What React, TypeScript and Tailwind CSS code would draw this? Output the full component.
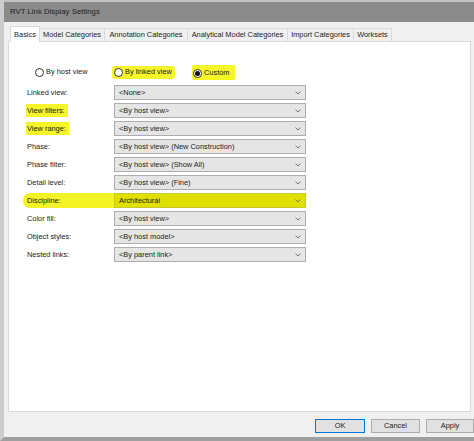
import React from 'react';

const tabs = [
  { name: 'Basics', w: 'w-[30px]', active: true },
  { name: 'Model Categories', w: 'w-[65px]' },
  { name: 'Annotation Categories', w: 'w-[83px]' },
  { name: 'Analytical Model Categories', w: 'w-[100px]' },
  { name: 'Import Categories', w: 'w-[66px]' },
  { name: 'Worksets', w: 'w-[38px]' },
];

const rows = [
  { label: 'Linked view:', value: '<None>' },
  { label: 'View filters:', value: '<By host view>', mark: true },
  { label: 'View range:', value: '<By host view>', mark: true },
  { label: 'Phase:', value: '<By host view> (New Construction)' },
  { label: 'Phase filter:', value: '<By host view> (Show All)' },
  { label: 'Detail level:', value: '<By host view> (Fine)' },
  { label: 'Discipline:', value: 'Architectural', band: true },
  { label: 'Color fill:', value: '<By host view>' },
  { label: 'Object styles:', value: '<By host model>' },
  { label: 'Nested links:', value: '<By parent link>' },
];

function Chevron() {
  return (
    <svg width="6" height="4" viewBox="0 0 6 4" className="shrink-0">
      <path d="M0.5 0.5 L3 3 L5.5 0.5" fill="none" stroke="#6a6a6a" strokeWidth="0.9" />
    </svg>
  );
}

function Radio({ label, checked, mark }: { label: string; checked?: boolean; mark?: string }) {
  return (
    <div className="w-[79px] flex items-center">
      <span className={`flex items-center gap-[2px] ${mark ?? ''}`}>
        <span className="w-[9px] h-[9px] rounded-full border border-[#333] bg-white flex items-center justify-center">
          {checked && <span className="w-[5px] h-[5px] rounded-full bg-[#111]" />}
        </span>
        <span>{label}</span>
      </span>
    </div>
  );
}

export default function App() {
  return (
    <div
      className="w-[474px] h-[441px] overflow-hidden bg-[#f0f0f0] flex flex-col border-l-[4px] border-b-[4px] border-l-[#cdcdcd] border-b-[#9f9f9f] text-[7.4px] leading-none text-[#1a1a1a]"
      style={{ fontFamily: '"Liberation Sans", Arial, sans-serif' }}
    >
      {/* Title bar */}
      <div className="h-[22px] shrink-0 bg-[#8b8b8b] border-t-[2px] border-[#c2c2c2] flex items-center pl-[6px] text-[7.8px] text-[#1e1e1e]">
        RVT Link Display Settings
      </div>

      {/* Tabs */}
      <div className="mt-[4px] ml-[6px] flex items-end h-[16px] shrink-0 relative z-10">
        {tabs.map((t) =>
          t.active ? (
            <div
              key={t.name}
              className={`${t.w} h-[16px] bg-white border border-b-0 border-[#d9d9d9] flex items-center justify-center`}
            >
              {t.name}
            </div>
          ) : (
            <div
              key={t.name}
              className={`${t.w} h-[13px] mb-[1px] bg-[#f0f0f0] border border-l-0 border-b-0 border-[#d9d9d9] flex items-center justify-center`}
            >
              {t.name}
            </div>
          ),
        )}
      </div>

      {/* Panel */}
      <div className="-mt-[1px] ml-[4px] mr-[3px] h-[371px] shrink-0 bg-white border border-[#d9d9d9] flex flex-col">
        <div className="mt-[24px] pl-[26px] h-[12px] flex items-center">
          <Radio label="By host view" />
          <Radio label="By linked view" mark="bg-[#f5f52a] -ml-[2px] pl-[2px] pr-[3px] py-[2px] -my-[2px] rounded-[3px]" />
          <Radio label="Custom" checked mark="bg-[#f5f52a] -ml-[1px] pl-[1px] pr-[6px] pt-[4px] pb-[2px] -my-[3px] rounded-[2px]" />
        </div>

        <div className="mt-[7px] pl-[18px] flex flex-col gap-[3px]">
          {rows.map((r) => (
            <div
              key={r.label}
              className={`h-[15px] flex items-center ${r.band ? 'bg-[#f3f325] -ml-[4px] pl-[4px] w-[283px] rounded-l-[7px]' : ''}`}
            >
              <div className="w-[87px] flex items-center">
                <span className={r.mark ? 'bg-[#f5f52a] -ml-[1px] px-[1px] py-[3px] pr-[3px]' : ''}>{r.label}</span>
              </div>
              <div
                className={`w-[192px] h-[15px] border flex items-center justify-between pl-[4px] pr-[4px] ${
                  r.band ? 'bg-[#e0e000] border-[#c9c92a]' : 'bg-[#e5e5e5] border-[#adadad]'
                }`}
              >
                <span>{r.value}</span>
                <Chevron />
              </div>
            </div>
          ))}
        </div>
      </div>

      {/* Footer buttons */}
      <div className="flex-1 flex items-start justify-end pt-[7px] gap-[6px]">
        <button className="w-[50px] h-[14px] bg-[#e1e1e1] border border-[#0078d7] flex items-center justify-center">OK</button>
        <button className="w-[49px] h-[14px] bg-[#e1e1e1] border border-[#adadad] flex items-center justify-center">Cancel</button>
        <button className="w-[48px] h-[14px] bg-[#e1e1e1] border border-[#adadad] flex items-center justify-center">Apply</button>
      </div>
    </div>
  );
}
